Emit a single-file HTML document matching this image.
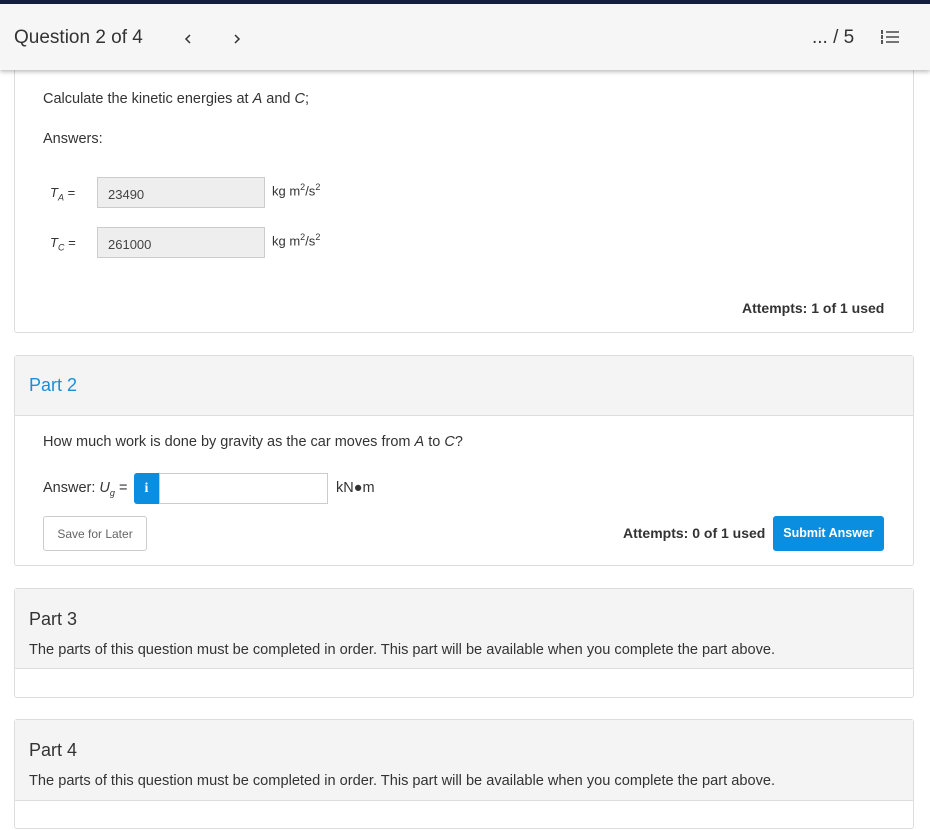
<!DOCTYPE html>
<html><head><style>
*{box-sizing:border-box;margin:0;padding:0}
body{width:930px;height:831px;overflow:hidden;background:#fff;font-family:"Liberation Sans",sans-serif;color:#333;position:relative;font-size:14.5px}
.top{position:absolute;left:0;top:0;width:930px;height:4px;background:#141f3f}
.hdr{position:absolute;left:0;top:4px;width:930px;height:66px;background:#f6f6f6;box-shadow:0 2px 4px rgba(0,0,0,.25);z-index:5}
.hdr .t{position:absolute;left:14px;top:23px;font-size:19px;color:#333}
.card{position:absolute;left:14px;width:900px;border:1px solid #ddd;border-radius:3px;background:#fff}
.ph{background:#f4f4f4;border-bottom:1px solid #ddd}
.abs{position:absolute}
.inp{position:absolute;width:168px;height:31px;background:#eee;border:1px solid #ccc;font-size:13px;padding:9px 10px;color:#444}
sup{font-size:9px}
</style></head><body>
<div class="top"></div>
<div class="hdr">
<div class="t">Question 2 of 4</div>
<svg class="abs" style="left:184px;top:29px" width="8" height="12"><path d="M6 2 L2 6 L6 10" stroke="#333" stroke-width="1.5" fill="none"/></svg>
<svg class="abs" style="left:233px;top:29px" width="8" height="12"><path d="M2 2 L6 6 L2 10" stroke="#333" stroke-width="1.5" fill="none"/></svg>
<div class="abs" style="left:812px;top:23px;font-size:19px">... / 5</div>
<svg class="abs" style="left:880px;top:25px" width="20" height="18"><g stroke="#555" stroke-width="1.6"><line x1="6" y1="3" x2="19" y2="3"/><line x1="6" y1="8" x2="19" y2="8"/><line x1="6" y1="13" x2="19" y2="13"/></g><g fill="#555"><rect x="1" y="1" width="2" height="4"/><rect x="1" y="6" width="2" height="4"/><rect x="1" y="11" width="2" height="4"/></g></svg>
</div>
<div class="card" style="top:40px;height:293px"></div>
<div class="abs" style="left:43px;top:91px">Calculate the kinetic energies at <i>A</i> and <i>C</i>;</div>
<div class="abs" style="left:43px;top:131px">Answers:</div>
<div class="abs" style="left:50px;top:185px;font-size:13px"><i>T<sub style="font-size:9px">A</sub></i> =</div>
<div class="inp" style="left:97px;top:177px">23490</div>
<div class="abs" style="left:272px;top:182px;font-size:13px">kg m<sup>2</sup>/s<sup>2</sup></div>
<div class="abs" style="left:50px;top:235px;font-size:13px"><i>T<sub style="font-size:9px">C</sub></i> =</div>
<div class="inp" style="left:97px;top:227px">261000</div>
<div class="abs" style="left:272px;top:232px;font-size:13px">kg m<sup>2</sup>/s<sup>2</sup></div>
<div class="abs" style="left:742px;top:300px;font-size:14px;font-weight:bold;color:#333">Attempts: 1 of 1 used</div>

<div class="card" style="top:355px;height:211px"><div class="ph" style="height:60px"></div></div>
<div class="abs" style="left:29px;top:375px;font-size:18px;color:#1a8ed8">Part 2</div>
<div class="abs" style="left:43px;top:434px">How much work is done by gravity as the car moves from <i>A</i> to <i>C</i>?</div>
<div class="abs" style="left:43px;top:480px">Answer: <i>U<sub style="font-size:9px">g</sub></i> =</div>
<div class="abs" style="left:134px;top:473px;width:25px;height:31px;background:#0b8edf;border-radius:3px 0 0 3px;color:#fff;font-weight:bold;font-family:'Liberation Serif',serif;text-align:center;line-height:31px;font-size:14px">i</div>
<div class="abs" style="left:159px;top:473px;width:169px;height:31px;border:1px solid #ccc"></div>
<div class="abs" style="left:336px;top:480px">kN&#9679;m</div>
<div class="abs" style="left:43px;top:516px;width:104px;height:35px;border:1px solid #ccc;border-radius:3px;font-size:12px;color:#666;text-align:center;line-height:34px">Save for Later</div>
<div class="abs" style="left:623px;top:525px;font-weight:bold;font-size:14px">Attempts: 0 of 1 used</div>
<div class="abs" style="left:773px;top:516px;width:111px;height:35px;background:#0b8edf;border-radius:3px;font-size:12.5px;color:#fff;font-weight:bold;text-align:center;line-height:35px">Submit Answer</div>

<div class="card" style="top:588px;height:110px"><div class="ph" style="height:80px"></div></div>
<div class="abs" style="left:29px;top:609px;font-size:18px">Part 3</div>
<div class="abs" style="left:29px;top:642px;font-size:14.6px">The parts of this question must be completed in order. This part will be available when you complete the part above.</div>
<div class="card" style="top:719px;height:110px"><div class="ph" style="height:81px"></div></div>
<div class="abs" style="left:29px;top:740px;font-size:18px">Part 4</div>
<div class="abs" style="left:29px;top:773px;font-size:14.6px">The parts of this question must be completed in order. This part will be available when you complete the part above.</div>
</body></html>
